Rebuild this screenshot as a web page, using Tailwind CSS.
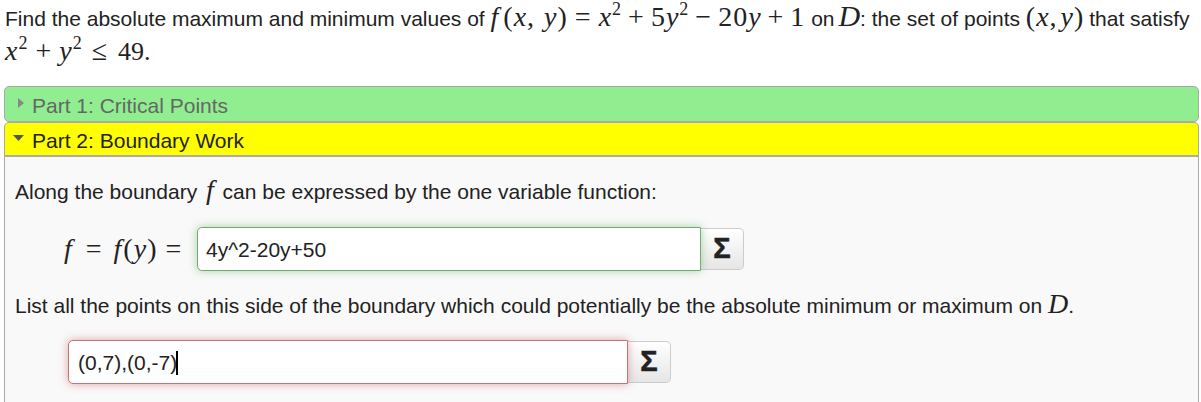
<!DOCTYPE html>
<html lang="en">
  <head>
    <meta charset="UTF-8" />
    <title>Absolute Extrema</title>
    <script src="https://cdn.jsdelivr.net/npm/@tailwindcss/browser@4"></script>
  </head>
  <body class="bg-white overflow-hidden h-[402px] font-['Liberation_Sans',Arial,sans-serif] text-[21px] text-[#222]">
    <!-- question -->
    <p class="pl-[5px] h-[86px] leading-[30px] whitespace-nowrap">
      Find the absolute maximum and minimum values of
      <span class="font-['Liberation_Serif',serif] text-[28px] tracking-[1px] leading-none"><i>f</i><span class="ml-[4px]">(</span><i>x</i>,<i class="ml-[9px]">y</i>)<span class="mx-[7px]">=</span><i>x</i><span class="text-[18px] align-[11px] leading-none">2</span><span class="mx-[6px]">+</span>5<i>y</i><span class="text-[18px] align-[11px] leading-none">2</span><span class="mx-[6px]">−</span>20<i>y</i><span class="mx-[6px]">+</span>1</span>
      on
      <i class="font-['Liberation_Serif',serif] text-[30px] leading-none ml-[-2px]">D</i>: the set of points
      <span class="font-['Liberation_Serif',serif] text-[28px] tracking-[1px] leading-none">(<i>x</i>,<i class="ml-[3px]">y</i>)</span>
      <span class="ml-[-1px]">that satisfy</span><br />
      <span class="font-['Liberation_Serif',serif] text-[28px] tracking-[1px] leading-none"><i>x</i><span class="text-[18px] align-[11px] leading-none">2</span><span class="mx-[7px]">+</span><i>y</i><span class="text-[18px] align-[11px] leading-none">2</span><span class="ml-[9px] mr-[10px]">≤</span><span class="text-[26px] tracking-normal">49.</span></span>
    </p>

    <div class="mx-[4px] w-[1195px]">
      <!-- part headers -->
      <div class="h-[36px] pt-[3px] flex items-center gap-[7px] pl-[12px] bg-[#90ee90] border border-[#aaa] rounded-[5px] text-[#666]">
        <svg width="8" height="12" viewBox="0 0 8 12" class="mt-[-6px]"><path d="M1 1 L7 6 L1 11 Z" fill="#888" /></svg>
        <span>Part 1: Critical Points</span>
      </div>
      <div class="h-[35px] pt-[3px] flex items-center gap-[8px] pl-[6px] bg-[#ffff00] border border-[#aaa] border-b-2 rounded-t-[5px]">
        <svg width="12" height="8" viewBox="0 0 12 8" class="mt-[-6px] ml-[2px] mr-[-1px]"><path d="M0 1 L11 1 L5.5 7 Z" fill="#555" /></svg>
        <span>Part 2: Boundary Work</span>
      </div>

      <!-- part body -->
      <div class="bg-[#f9f9f9] border-x border-[#aaa] h-[246px] pl-[10px]">
        <p class="pt-[19px] leading-[28px] h-[70px] whitespace-nowrap">
          Along the boundary
          <i class="font-['Liberation_Serif',serif] text-[28px] leading-none ml-[3px] mr-[3px]">f</i>
          can be expressed by the one variable function:
        </p>

        <div class="flex items-center ml-[49px] h-[44px]">
          <span class="font-['Liberation_Serif',serif] text-[28px] tracking-[1px] w-[133px] whitespace-nowrap"><i>f</i><span class="ml-[13px] mr-[11px]">=</span><i>f</i><span class="ml-[1px]">(</span><i>y</i>)<span class="ml-[8px]">=</span></span>
          <div class="w-[504px] h-[44px] flex items-center pl-[8px] pt-[1px] bg-white border border-[#6fae6f] rounded-l-[5px] shadow-[0_0_8px_rgba(90,170,90,0.5)] z-10">4y^2-20y+50</div>
          <div class="w-[43px] h-[42px] flex items-center justify-center bg-linear-to-b from-white to-[#e6e6e6] border border-[#ccc] border-l-0 rounded-r-[5px] font-black text-[29px] [-webkit-text-stroke:0.5px_#222]">Σ</div>
        </div>

        <p class="mt-[19px] h-[50px] leading-[28px] whitespace-nowrap">
          List all the points on this side of the boundary which could potentially be the absolute minimum or maximum on
          <i class="font-['Liberation_Serif',serif] text-[28px] leading-none">D</i>.
        </p>

        <div class="flex items-center ml-[53px] h-[44px]">
          <div class="w-[560px] h-[44px] flex items-center pl-[9px] pt-[1px] bg-white border border-[#cc7070] rounded-l-[5px] shadow-[0_0_8px_rgba(200,80,80,0.5)] z-10">
            (0,7),(0,-7)<span class="w-[2px] h-[24px] bg-black ml-[-1px]"></span>
          </div>
          <div class="w-[43px] h-[42px] flex items-center justify-center bg-linear-to-b from-white to-[#e6e6e6] border border-[#ccc] border-l-0 rounded-r-[5px] font-black text-[29px] [-webkit-text-stroke:0.5px_#222]">Σ</div>
        </div>
      </div>
    </div>
  </body>
</html>
